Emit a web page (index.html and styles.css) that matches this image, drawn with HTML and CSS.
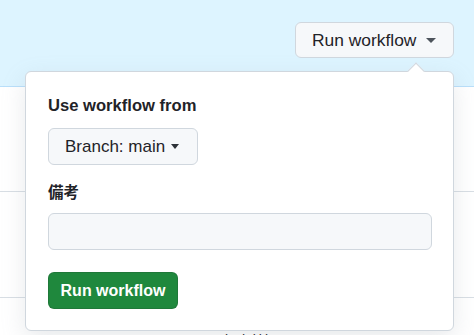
FILE: index.html
```html
<!DOCTYPE html>
<html lang="ja">
<head>
<meta charset="utf-8">
<title>Run workflow</title>
<link rel="stylesheet" href="styles.css">
</head>
<body>
<div class="page">
  <div class="banner">
    <button class="btn btn-top" type="button"><span>Run workflow</span><span class="caret caret-gray"></span></button>
  </div>
  <div class="row row-1"></div>
  <div class="row row-2"></div>
  <div class="row row-3"><span class="row-text">lahiii</span></div>

  <div class="popover">
    <span class="popover-arrow"></span>
    <div class="heading">Use workflow from</div>
    <button class="btn btn-branch" type="button"><span>Branch: main</span><span class="caret caret-dark"></span></button>
    <label class="label" for="note">備考</label>
    <input class="input" id="note" type="text">
    <button class="btn-primary" type="button">Run workflow</button>
  </div>
</div>
</body>
</html>
```
FILE: styles.css
```css
* { box-sizing: border-box; }
html, body { margin: 0; padding: 0; }
body {
  font-family: "Liberation Sans", "Noto Sans CJK JP", sans-serif;
  color: #1f2328;
  background: #ffffff;
  overflow: hidden;
}
.page {
  position: relative;
  width: 474px;
  height: 335px;
  overflow: hidden;
}
.banner {
  height: 87px;
  background: #ddf4ff;
  border-bottom: 1px solid #b9dffa;
  display: flex;
  justify-content: flex-end;
  align-items: flex-start;
  padding: 22px 20px 0 0;
}
.btn {
  display: inline-flex;
  align-items: center;
  border: 1px solid #d0d7de;
  border-radius: 6px;
  background: #f6f8fa;
  color: #1f2328;
  font-family: inherit;
  cursor: pointer;
  margin: 0;
}
.btn-top {
  height: 36px;
  width: 159px;
  padding: 0 0 0 16px;
  font-size: 17.4px;
  gap: 10px;
}
.caret {
  display: inline-block;
  width: 0;
  height: 0;
  border-left: 5px solid transparent;
  border-right: 5px solid transparent;
  border-top: 5px solid currentColor;
}
.caret-gray { color: #4d545c; }
.caret-dark { color: #2d3238; border-left-width: 4.5px; border-right-width: 4.5px; }
.row {
  border-bottom: 1px solid #d8dee4;
}
.row-1 { height: 105px; }
.row-2 { height: 106px; }
.row-3 { height: 60px; position: relative; }
.row-text {
  display: block;
  padding: 34px 0 0 225px;
  font-size: 14px;
  color: #1f2328;
  letter-spacing: 3px;
}
.popover {
  position: absolute;
  top: 71px;
  left: 25px;
  width: 429px;
  height: 260px;
  background: #ffffff;
  border: 1px solid #d0d7de;
  border-radius: 6px;
  box-shadow: 0 8px 24px rgba(140, 149, 159, 0.2);
  padding: 24px 21px 0 22px;
  display: flex;
  flex-direction: column;
  align-items: flex-start;
}
.popover-arrow {
  position: absolute;
  top: -7px;
  left: 384px;
  width: 12px;
  height: 12px;
  background: #ffffff;
  border-top: 1px solid #d0d7de;
  border-left: 1px solid #d0d7de;
  transform: rotate(45deg);
}
.heading {
  font-size: 16.6px;
  font-weight: bold;
  line-height: 19px;
}
.btn-branch {
  margin-top: 13px;
  height: 37px;
  width: 150px;
  padding: 0 0 0 16px;
  font-size: 17px;
  gap: 6px;
}
.label {
  margin-top: 16px;
  font-size: 15.5px;
  line-height: 20px;
  font-weight: bold;
  font-family: "Noto Sans CJK JP", sans-serif;
}
.input {
  margin-top: 12px;
  width: 384px;
  height: 37px;
  border: 1px solid #d0d7de;
  border-radius: 6px;
  background: #f6f8fa;
  font-family: inherit;
  font-size: 16px;
  padding: 0 12px;
}
.btn-primary {
  margin-top: 22px;
  height: 37px;
  width: 130px;
  padding: 0;
  border: 1px solid rgba(31, 35, 40, 0.15);
  border-radius: 6px;
  background: #1f883d;
  color: #ffffff;
  font-family: inherit;
  font-size: 16px;
  font-weight: bold;
  cursor: pointer;
}
```
